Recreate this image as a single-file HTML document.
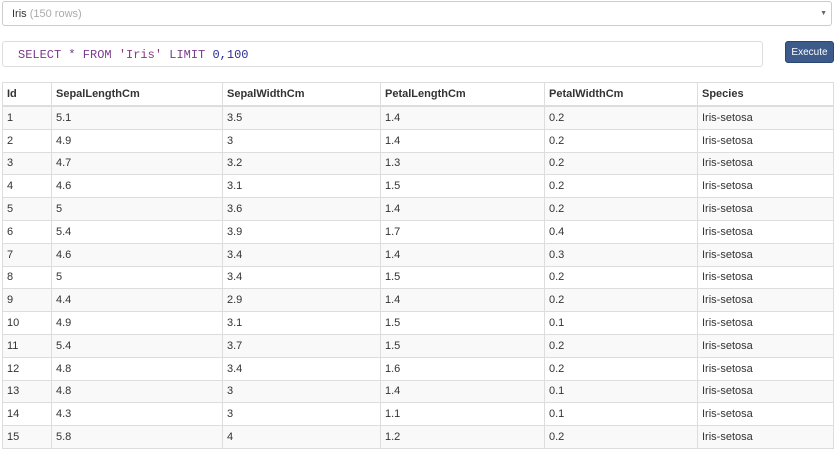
<!DOCTYPE html>
<html><head><style>
body{margin:0;width:836px;height:448px;overflow:hidden;background:#fff;font-family:"Liberation Sans",sans-serif;font-size:11px;color:#333;position:relative}
.sel{position:absolute;left:2px;top:1px;width:828px;height:23px;border:1px solid #ccc;border-radius:3px;box-sizing:content-box}
.sel span{position:absolute;left:9px;top:6px}
.sel i{font-style:normal;color:#aaa}
.sel b{position:absolute;right:4px;top:8px;font-size:7px;color:#666;font-weight:normal}
.q{position:absolute;left:2px;top:41px;width:759px;height:24px;border:1px solid #ddd;border-radius:3px}
.q span{position:absolute;left:15px;top:6px;font-family:"Liberation Mono",monospace;font-size:12px;color:#7b3a8e}
.q .n{color:#2c2c9a}.q .s{color:#8a3a7a}
.btn{position:absolute;left:785px;top:41px;width:49px;height:22px;background:#3c5a8a;border:1px solid #2b4670;border-radius:3px;color:#fff;font-size:10px;text-align:center;line-height:22px;box-sizing:border-box}
table{position:absolute;left:2px;top:82px;width:832px;border-collapse:collapse;table-layout:fixed}
td,th{border:1px solid #ddd;padding:0 0 0 4px;text-align:left;white-space:nowrap}
th{height:22px;border-bottom:2px solid #ddd;font-weight:bold}
td{height:21.8px}
tr:nth-child(odd) td{background:#f9f9f9}
</style></head><body>
<div class="sel"><span>Iris <i>(150 rows)</i></span><b>▼</b></div>
<div class="q"><span>SELECT * FROM <span class="s" style="position:static">'Iris'</span> LIMIT <span class="n" style="position:static">0,100</span></span></div>
<div class="btn">Execute</div>
<table>
<colgroup><col style="width:49px"><col style="width:171px"><col style="width:158px"><col style="width:164px"><col style="width:153px"><col></colgroup>
<thead><tr><th>Id</th><th>SepalLengthCm</th><th>SepalWidthCm</th><th>PetalLengthCm</th><th>PetalWidthCm</th><th>Species</th></tr></thead>
<tbody>
<tr><td>1</td><td>5.1</td><td>3.5</td><td>1.4</td><td>0.2</td><td>Iris-setosa</td></tr>
<tr><td>2</td><td>4.9</td><td>3</td><td>1.4</td><td>0.2</td><td>Iris-setosa</td></tr>
<tr><td>3</td><td>4.7</td><td>3.2</td><td>1.3</td><td>0.2</td><td>Iris-setosa</td></tr>
<tr><td>4</td><td>4.6</td><td>3.1</td><td>1.5</td><td>0.2</td><td>Iris-setosa</td></tr>
<tr><td>5</td><td>5</td><td>3.6</td><td>1.4</td><td>0.2</td><td>Iris-setosa</td></tr>
<tr><td>6</td><td>5.4</td><td>3.9</td><td>1.7</td><td>0.4</td><td>Iris-setosa</td></tr>
<tr><td>7</td><td>4.6</td><td>3.4</td><td>1.4</td><td>0.3</td><td>Iris-setosa</td></tr>
<tr><td>8</td><td>5</td><td>3.4</td><td>1.5</td><td>0.2</td><td>Iris-setosa</td></tr>
<tr><td>9</td><td>4.4</td><td>2.9</td><td>1.4</td><td>0.2</td><td>Iris-setosa</td></tr>
<tr><td>10</td><td>4.9</td><td>3.1</td><td>1.5</td><td>0.1</td><td>Iris-setosa</td></tr>
<tr><td>11</td><td>5.4</td><td>3.7</td><td>1.5</td><td>0.2</td><td>Iris-setosa</td></tr>
<tr><td>12</td><td>4.8</td><td>3.4</td><td>1.6</td><td>0.2</td><td>Iris-setosa</td></tr>
<tr><td>13</td><td>4.8</td><td>3</td><td>1.4</td><td>0.1</td><td>Iris-setosa</td></tr>
<tr><td>14</td><td>4.3</td><td>3</td><td>1.1</td><td>0.1</td><td>Iris-setosa</td></tr>
<tr><td>15</td><td>5.8</td><td>4</td><td>1.2</td><td>0.2</td><td>Iris-setosa</td></tr>
</tbody></table>
</body></html>
